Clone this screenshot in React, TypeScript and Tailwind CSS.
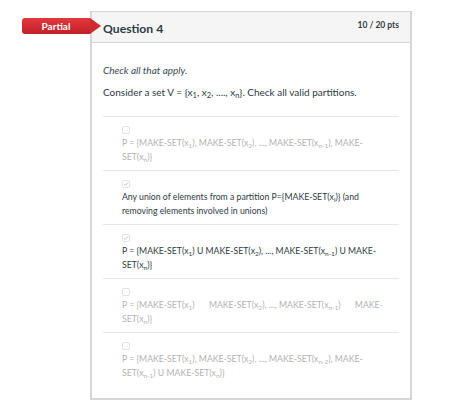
const dark = "text-[#2d3b45]";
const faint = "text-[#b3b3b3]";

function Box({ checked }: { checked?: boolean }) {
  return (
    <div className="flex h-[8px] w-[8px] items-center justify-center rounded-[2px] border border-[#e3e3e3]">
      {checked && (
        <svg viewBox="0 0 8 8" className="h-[6px] w-[6px]">
          <path d="M1.5 4.2 L3.2 5.8 L6.5 2" fill="none" stroke="#b0b0b0" strokeWidth="1" />
        </svg>
      )}
    </div>
  );
}

function Sub({ children, small }: { children: React.ReactNode; small?: boolean }) {
  return <sub className={small ? "text-[6.5px]" : "text-[7.5px]"}>{children}</sub>;
}

function Option({
  checked,
  active,
  last,
  children,
}: {
  checked?: boolean;
  active?: boolean;
  last?: boolean;
  children: React.ReactNode;
}) {
  return (
    <div className={`pl-[19px] pr-[10px] pt-[9px] ${last ? "" : "border-b border-[#e8e8e8] pb-[6px]"}`}>
      <Box checked={checked} />
      <div className={`mt-[2px] text-[8.7px] leading-[14px] ${active ? dark : faint}`}>{children}</div>
    </div>
  );
}

export default function App() {
  return (
    <div className="min-h-[406px] bg-white pl-[90px] pt-[11px]" style={{ fontFamily: "Lato, 'Open Sans', sans-serif" }}>
      <div className="relative w-[322px] border-x-2 border-b-2 border-t border-[#d6d6d6] bg-white">
        {/* badge */}
        <div className="absolute left-[-70px] top-[6px] flex h-[16px] items-center">
          <div className="flex h-[16px] w-[68px] items-center justify-center rounded-l-[3px] bg-gradient-to-b from-[#e4373d] to-[#bf2026] text-[10px] font-bold text-white">
            Partial
          </div>
          <div className="h-0 w-0 border-y-[8px] border-l-[11px] border-y-transparent border-l-[#cf2a30]" />
        </div>

        <div className="flex h-[31px] items-start justify-between border-b border-[#d6d6d6] bg-[#f5f5f5] pl-[11px] pr-[11px]">
          <div className={`pt-[8px] text-[12.2px] font-bold leading-[18px] ${dark}`}>Question 4</div>
          <div className={`pt-[7px] text-[8.5px] font-bold leading-[12px] ${dark}`}>10 / 20 pts</div>
        </div>

        <div className="px-[11px] pb-[18px] pt-[19px]">
          <div className="text-[10px] italic leading-[16px] text-[#3d4a54]">Check all that apply.</div>
          <div className={`mt-[6px] text-[10px] leading-[16px] ${dark}`}>
            Consider a set V = {"{"}x<Sub>1</Sub>, x<Sub>2</Sub>, ...., x<Sub>n</Sub>{"}"}. Check all valid partitions.
          </div>
          <div className="mt-[16px] border-b border-[#e8e8e8]" />

          <Option>
            P = {"{"}MAKE-SET(x<Sub small>1</Sub>), MAKE-SET(x<Sub small>2</Sub>), ..., MAKE-SET(x<Sub small>n-1</Sub>), MAKE-SET(x
            <Sub small>n</Sub>){"}"}
          </Option>
          <Option checked active>
            Any union of elements from a partition P={"{"}MAKE-SET(x<Sub small>i</Sub>){"}"} (and removing elements involved in
            unions)
          </Option>
          <Option checked active>
            P = {"{"}MAKE-SET(x<Sub small>1</Sub>) U MAKE-SET(x<Sub small>2</Sub>), ..., MAKE-SET(x<Sub small>n-1</Sub>) U
            MAKE-SET(x<Sub small>n</Sub>){"}"}
          </Option>
          <Option>
            P = {"{"}MAKE-SET(x<Sub small>1</Sub>)<span className="inline-block w-[12px]" /> MAKE-SET(x<Sub small>2</Sub>), ...,
            MAKE-SET(x<Sub small>n-1</Sub>)<span className="inline-block w-[12px]" /> MAKE-SET(x<Sub small>n</Sub>){"}"}
          </Option>
          <Option last>
            P = {"{"}MAKE-SET(x<Sub small>1</Sub>), MAKE-SET(x<Sub small>2</Sub>), ..., MAKE-SET(x<Sub small>n-2</Sub>), MAKE-SET(x
            <Sub small>n-1</Sub>) U MAKE-SET(x<Sub small>n</Sub>){"}"}
          </Option>
        </div>
      </div>
    </div>
  );
}
